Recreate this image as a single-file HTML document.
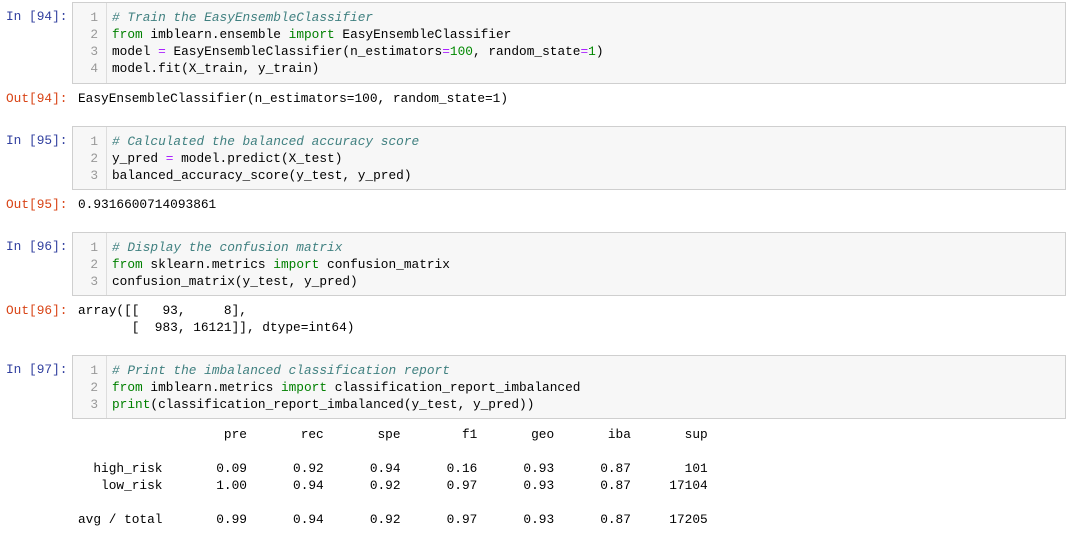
<!DOCTYPE html>
<html><head><meta charset="utf-8"><style>
body{margin:0;width:1074px;height:538px;background:#fff;position:relative;overflow:hidden;font-family:"Liberation Mono",monospace;font-size:12.8px;}
.p{position:absolute;left:6px;line-height:17px;white-space:pre;}
.in{color:#303F9F}.out{color:#D84315}
.box{position:absolute;left:72px;width:994px;background:#f7f7f7;border:1px solid #cfcfcf;box-sizing:border-box;}
.g{position:absolute;left:0;top:0;bottom:0;width:33px;border-right:1px solid #ddd;}
.ln{position:absolute;left:0;width:25px;text-align:right;color:#999;line-height:17px;}
.code{position:absolute;left:39px;line-height:17px;white-space:pre;color:#000;}
.c{color:#408080;font-style:italic}.k{color:#008000}.o{color:#AA22FF}.n{color:#080}
.t{position:absolute;left:78px;white-space:pre;color:#000;margin:0;font:inherit;line-height:17px;}
</style></head><body>

<div class="p in" style="top:8px">In [94]:</div>
<div class="box" style="top:2px;height:82px"><div class="g"></div>
<div class="ln" style="top:6px">1<br>2<br>3<br>4</div>
<div class="code" style="top:6px"><span class="c"># Train the EasyEnsembleClassifier</span>
<span class="k">from</span> imblearn.ensemble <span class="k">import</span> EasyEnsembleClassifier
model <span class="o">=</span> EasyEnsembleClassifier(n_estimators<span class="o">=</span><span class="n">100</span>, random_state<span class="o">=</span><span class="n">1</span>)
model.fit(X_train, y_train)</div></div>
<div class="p out" style="top:90px">Out[94]:</div>
<div class="t" style="top:90px">EasyEnsembleClassifier(n_estimators=100, random_state=1)</div>

<div class="p in" style="top:132px">In [95]:</div>
<div class="box" style="top:126px;height:64px"><div class="g"></div>
<div class="ln" style="top:6px">1<br>2<br>3</div>
<div class="code" style="top:6px"><span class="c"># Calculated the balanced accuracy score</span>
y_pred <span class="o">=</span> model.predict(X_test)
balanced_accuracy_score(y_test, y_pred)</div></div>
<div class="p out" style="top:196px">Out[95]:</div>
<div class="t" style="top:196px">0.9316600714093861</div>

<div class="p in" style="top:238px">In [96]:</div>
<div class="box" style="top:232px;height:64px"><div class="g"></div>
<div class="ln" style="top:6px">1<br>2<br>3</div>
<div class="code" style="top:6px"><span class="c"># Display the confusion matrix</span>
<span class="k">from</span> sklearn.metrics <span class="k">import</span> confusion_matrix
confusion_matrix(y_test, y_pred)</div></div>
<div class="p out" style="top:302px">Out[96]:</div>
<div class="t" style="top:302px">array([[   93,     8],
       [  983, 16121]], dtype=int64)</div>

<div class="p in" style="top:361px">In [97]:</div>
<div class="box" style="top:355px;height:64px"><div class="g"></div>
<div class="ln" style="top:6px">1<br>2<br>3</div>
<div class="code" style="top:6px"><span class="c"># Print the imbalanced classification report</span>
<span class="k">from</span> imblearn.metrics <span class="k">import</span> classification_report_imbalanced
<span class="k">print</span>(classification_report_imbalanced(y_test, y_pred))</div></div>

<pre class="t" style="top:426px">                   pre       rec       spe        f1       geo       iba       sup

  high_risk       0.09      0.92      0.94      0.16      0.93      0.87       101
   low_risk       1.00      0.94      0.92      0.97      0.93      0.87     17104

avg / total       0.99      0.94      0.92      0.97      0.93      0.87     17205</pre>
</body></html>
